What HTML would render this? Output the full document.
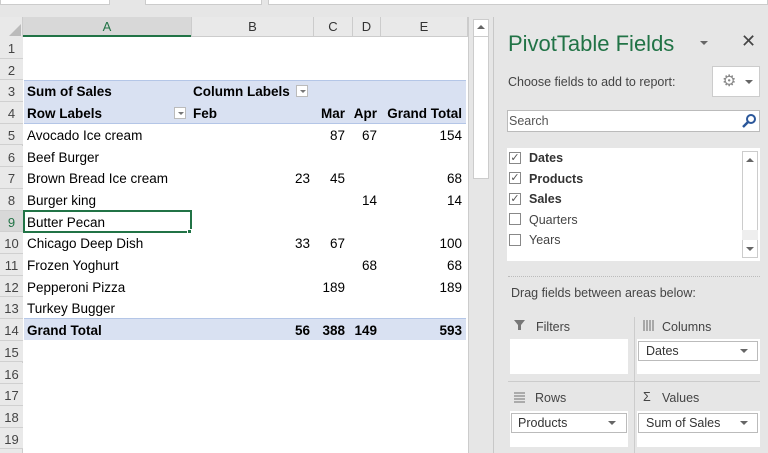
<!DOCTYPE html>
<html><head><style>
*{margin:0;padding:0;box-sizing:border-box}
body{width:768px;height:453px;overflow:hidden;background:#e6e6e6;font-family:"Liberation Sans",sans-serif;position:relative;color:#000}
.a{position:absolute;white-space:nowrap}
.c{font-size:13.5px;line-height:21.7px;height:21.7px;padding-top:1px}
.rn{left:0;width:23px;text-align:center;font-size:13px;color:#444;background:#e9e9e9;border-bottom:1px solid #d0d0d0}
.r{text-align:right}
.b{font-weight:bold}
.dd{position:absolute;width:12px;height:12px;border:1px solid #bbb;background:#fff}
.dd:after{content:"";position:absolute;left:3px;top:4px;border-left:3px solid transparent;border-right:3px solid transparent;border-top:3px solid #777}
.tri{position:absolute;border-left:4px solid transparent;border-right:4px solid transparent;border-top:4px solid #666}
.cb{position:absolute;width:12px;height:12px;border:1px solid #888;background:#fff;font-size:11px;line-height:10px;text-align:center;color:#555}
.p{font-size:12.5px;color:#444}
</style></head><body>
<div class="a" style="left:0;top:0;width:768px;height:17px;background:#e6e6e6"></div>
<div class="a" style="left:0;top:0;width:110px;height:5px;background:#fff;border:1px solid #ccc;border-top:none"></div>
<div class="a" style="left:145px;top:0;width:117px;height:5px;background:#fff;border:1px solid #ccc;border-top:none"></div>
<div class="a" style="left:268px;top:0;width:500px;height:5px;background:#fff;border:1px solid #ccc;border-top:none"></div>
<div class="a" style="left:0;top:17px;width:468px;height:436px;background:#fff"></div>
<div class="a" style="left:0;top:17px;width:468px;height:20px;background:#e9e9e9;border-bottom:1px solid #ccc"></div>
<div class="a" style="left:0;top:17px;width:23px;height:436px;background:#e9e9e9;border-right:1px solid #ccc"></div>
<div class="a" style="left:9px;top:24px;border-left:12px solid transparent;border-bottom:12px solid #bbb"></div>
<div class="a" style="left:23px;top:17px;width:168px;height:20px;background:#d8d8d8;border-bottom:2px solid #217346;text-align:center;font-size:13px;line-height:20px;color:#217346">A</div>
<div class="a" style="left:191px;top:17px;width:122px;height:20px;border-left:1px solid #ccc;text-align:center;font-size:13px;line-height:20px;color:#333">B</div>
<div class="a" style="left:313px;top:17px;width:39px;height:20px;border-left:1px solid #ccc;text-align:center;font-size:13px;line-height:20px;color:#333">C</div>
<div class="a" style="left:352px;top:17px;width:28px;height:20px;border-left:1px solid #ccc;text-align:center;font-size:13px;line-height:20px;color:#333">D</div>
<div class="a" style="left:380px;top:17px;width:88px;height:20px;border-left:1px solid #ccc;border-right:1px solid #ccc;text-align:center;font-size:13px;line-height:20px;color:#333">E</div>
<div class="a" style="left:24px;top:80px;width:442px;height:44px;background:#d9e1f2;border-top:1px solid #b4c6e7;border-bottom:1px solid #b4c6e7"></div>
<div class="a" style="left:24px;top:318px;width:442px;height:22px;background:#d9e1f2;border-top:1px solid #b4c6e7"></div>
<div class="a c rn" style="top:37px">1</div>
<div class="a c rn" style="top:58.7px">2</div>
<div class="a c rn" style="top:80.4px">3</div>
<div class="a c rn" style="top:102.1px">4</div>
<div class="a c rn" style="top:123.8px">5</div>
<div class="a c rn" style="top:145.5px">6</div>
<div class="a c rn" style="top:167.2px">7</div>
<div class="a c rn" style="top:188.9px">8</div>
<div class="a c rn" style="top:210.6px;background:#d8d8d8;color:#217346">9</div>
<div class="a c rn" style="top:232.3px">10</div>
<div class="a c rn" style="top:254px">11</div>
<div class="a c rn" style="top:275.7px">12</div>
<div class="a c rn" style="top:297.4px">13</div>
<div class="a c rn" style="top:319.1px">14</div>
<div class="a c rn" style="top:340.8px">15</div>
<div class="a c rn" style="top:362.5px">16</div>
<div class="a c rn" style="top:384.2px">17</div>
<div class="a c rn" style="top:405.9px">18</div>
<div class="a c rn" style="top:427.6px">19</div>
<div class="a c b" style="left:27px;top:80.4px">Sum of Sales</div>
<div class="a c b" style="left:193px;top:80.4px">Column Labels</div>
<div class="dd" style="left:296px;top:85px"></div>
<div class="a c b" style="left:27px;top:102.1px">Row Labels</div>
<div class="dd" style="left:174px;top:107px"></div>
<div class="a c b" style="left:193px;top:102.1px">Feb</div>
<div class="a c b r" style="left:313px;width:32px;top:102.1px">Mar</div>
<div class="a c b r" style="left:346px;width:31px;top:102.1px">Apr</div>
<div class="a c b r" style="left:380px;width:82px;top:102.1px">Grand Total</div>
<div class="a c" style="left:27px;top:123.8px">Avocado Ice cream</div>
<div class="a c r" style="left:313px;width:32px;top:123.8px">87</div>
<div class="a c r" style="left:346px;width:31px;top:123.8px">67</div>
<div class="a c r" style="left:380px;width:82px;top:123.8px">154</div>
<div class="a c" style="left:27px;top:145.5px">Beef Burger</div>
<div class="a c" style="left:27px;top:167.2px">Brown Bread Ice cream</div>
<div class="a c r" style="left:270px;width:40px;top:167.2px">23</div>
<div class="a c r" style="left:313px;width:32px;top:167.2px">45</div>
<div class="a c r" style="left:380px;width:82px;top:167.2px">68</div>
<div class="a c" style="left:27px;top:188.9px">Burger king</div>
<div class="a c r" style="left:346px;width:31px;top:188.9px">14</div>
<div class="a c r" style="left:380px;width:82px;top:188.9px">14</div>
<div class="a" style="left:23px;top:210px;width:169px;height:23px;border:2px solid #217346"></div>
<div class="a" style="left:187px;top:229px;width:5px;height:5px;background:#217346;border:1px solid #fff"></div>
<div class="a c" style="left:27px;top:210.6px">Butter Pecan</div>
<div class="a c" style="left:27px;top:232.3px">Chicago Deep Dish</div>
<div class="a c r" style="left:270px;width:40px;top:232.3px">33</div>
<div class="a c r" style="left:313px;width:32px;top:232.3px">67</div>
<div class="a c r" style="left:380px;width:82px;top:232.3px">100</div>
<div class="a c" style="left:27px;top:254px">Frozen Yoghurt</div>
<div class="a c r" style="left:346px;width:31px;top:254px">68</div>
<div class="a c r" style="left:380px;width:82px;top:254px">68</div>
<div class="a c" style="left:27px;top:275.7px">Pepperoni Pizza</div>
<div class="a c r" style="left:313px;width:32px;top:275.7px">189</div>
<div class="a c r" style="left:380px;width:82px;top:275.7px">189</div>
<div class="a c" style="left:27px;top:297.4px">Turkey Bugger</div>
<div class="a c b" style="left:27px;top:319.1px">Grand Total</div>
<div class="a c b r" style="left:270px;width:40px;top:319.1px">56</div>
<div class="a c b r" style="left:313px;width:32px;top:319.1px">388</div>
<div class="a c b r" style="left:346px;width:31px;top:319.1px">149</div>
<div class="a c b r" style="left:380px;width:82px;top:319.1px">593</div>
<div class="a" style="left:468px;top:17px;width:26px;height:436px;background:#e6e6e6;border-left:1px solid #ccc"></div>
<div class="a" style="left:473px;top:19px;width:16px;height:160px;background:#fff;border:1px solid #ccc"></div>
<div class="a" style="left:477px;top:25px;border-left:4px solid transparent;border-right:4px solid transparent;border-bottom:4px solid #666"></div>
<div class="a" style="left:473px;top:36px;width:16px;height:1px;background:#ccc"></div>
<div class="a" style="left:493px;top:17px;width:1px;height:436px;background:#c8c8c8"></div>
<div class="a" style="left:508px;top:31px;font-size:22px;color:#217346">PivotTable Fields</div>
<div class="tri" style="left:700px;top:41px"></div>
<div class="a" style="left:741px;top:31px;font-size:18px;color:#444">✕</div>
<div class="a p" style="left:508px;top:75px">Choose fields to add to report:</div>
<div class="a" style="left:712px;top:66px;width:48px;height:31px;background:#fff;border:1px solid #ccc"></div>
<div class="a" style="left:722px;top:71px;font-size:16px;color:#888">⚙</div>
<div class="tri" style="left:745px;top:80px"></div>
<div class="a" style="left:507px;top:110px;width:253px;height:22px;background:#fff;border:1px solid #bbb"></div>
<div class="a p" style="left:509px;top:114px;color:#555">Search</div>
<svg class="a" style="left:741px;top:113px" width="16" height="16"><circle cx="10" cy="6" r="4" fill="none" stroke="#2b579a" stroke-width="2"/><line x1="7" y1="9" x2="2" y2="14" stroke="#2b579a" stroke-width="2.5"/></svg>
<div class="a" style="left:507px;top:148px;width:253px;height:113px;background:#fff"></div>
<div class="a" style="left:742px;top:151px;width:16px;height:107px;background:#fff;border:1px solid #ccc"></div>
<div class="a" style="left:742px;top:230px;width:16px;height:10px;background:#eee"></div>
<div class="a" style="left:746px;top:158px;border-left:4px solid transparent;border-right:4px solid transparent;border-bottom:4px solid #666"></div>
<div class="tri" style="left:746px;top:247px"></div>
<div class="cb" style="left:509px;top:152px">✓</div><div class="a b" style="left:529px;top:151px;font-size:12.5px;color:#333">Dates</div>
<div class="cb" style="left:509px;top:172px">✓</div><div class="a b" style="left:529px;top:172px;font-size:12.5px;color:#333">Products</div>
<div class="cb" style="left:509px;top:193px">✓</div><div class="a b" style="left:529px;top:192px;font-size:12.5px;color:#333">Sales</div>
<div class="cb" style="left:509px;top:213px"></div><div class="a p" style="left:529px;top:213px">Quarters</div>
<div class="cb" style="left:509px;top:234px"></div><div class="a p" style="left:529px;top:233px">Years</div>
<div class="a" style="left:508px;top:276px;width:252px;border-top:1px dotted #bbb"></div>
<div class="a p" style="left:511px;top:286px">Drag fields between areas below:</div>
<div class="a" style="left:634px;top:317px;width:1px;height:136px;background:#ccc"></div>
<div class="a" style="left:508px;top:381px;width:252px;height:1px;background:#ccc"></div>
<svg class="a" style="left:514px;top:320px" width="12" height="11"><path d="M0 0H11L7 5V10H4V5Z" fill="#777"/></svg>
<div class="a p" style="left:536px;top:320px">Filters</div>
<div class="a" style="left:510px;top:339px;width:118px;height:35px;background:#fff"></div>
<svg class="a" style="left:643px;top:320px" width="12" height="11"><path d="M1 0V11M4 0V11M7 0V11M10 0V11" stroke="#888" stroke-width="1.3"/></svg>
<div class="a p" style="left:662px;top:320px">Columns</div>
<div class="a" style="left:637px;top:339px;width:123px;height:35px;background:#fff"></div>
<div class="a" style="left:638px;top:341px;width:120px;height:20px;border:1px solid #bbb;background:#fff"></div>
<div class="a p" style="left:646px;top:344px;color:#333">Dates</div>
<div class="tri" style="left:740px;top:349px"></div>
<svg class="a" style="left:514px;top:392px" width="12" height="11"><path d="M0 1H11M0 4H11M0 7H11M0 10H11" stroke="#888" stroke-width="1.3"/></svg>
<div class="a p" style="left:535px;top:391px">Rows</div>
<div class="a" style="left:510px;top:411px;width:118px;height:36px;background:#fff"></div>
<div class="a" style="left:511px;top:413px;width:116px;height:20px;border:1px solid #bbb;background:#fff"></div>
<div class="a p" style="left:518px;top:416px;color:#333">Products</div>
<div class="tri" style="left:608px;top:421px"></div>
<div class="a p" style="left:643px;top:390px">Σ</div>
<div class="a p" style="left:662px;top:391px">Values</div>
<div class="a" style="left:637px;top:411px;width:123px;height:36px;background:#fff"></div>
<div class="a" style="left:638px;top:413px;width:120px;height:20px;border:1px solid #bbb;background:#fff"></div>
<div class="a p" style="left:646px;top:416px;color:#333">Sum of Sales</div>
<div class="tri" style="left:740px;top:421px"></div>
</body></html>
